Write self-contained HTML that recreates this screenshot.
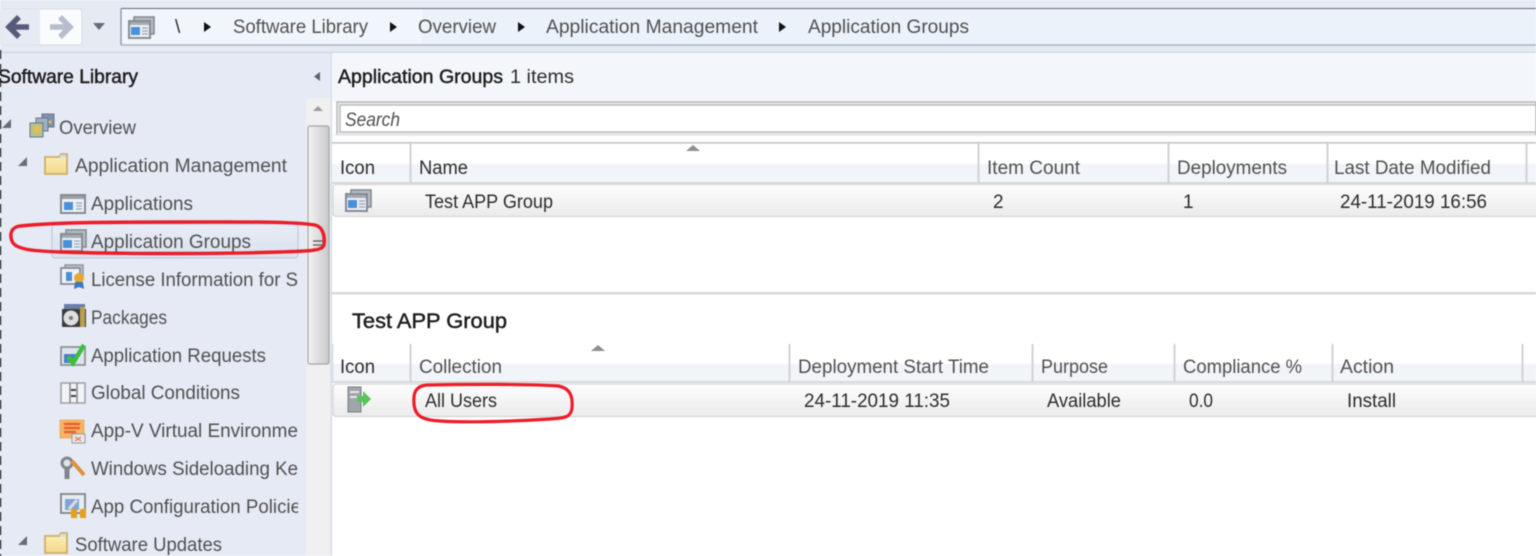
<!DOCTYPE html>
<html>
<head>
<meta charset="utf-8">
<title>Application Groups</title>
<style>
html,body{margin:0;padding:0;width:1536px;height:556px;overflow:hidden;background:#fff}
svg{display:block}
#all{filter:blur(.6px)}
text{font-family:"Liberation Sans",sans-serif;font-size:19px;fill:#505050}
.d{fill:#2c2c2c}
.b{fill:#1c1c1c;stroke:#1c1c1c;stroke-width:.45px}
</style>
</head>
<body>
<svg width="1536" height="556" viewBox="0 0 1536 556" xmlns="http://www.w3.org/2000/svg">
<defs>
<linearGradient id="row" x1="0" y1="0" x2="0" y2="1"><stop offset="0" stop-color="#fdfdfd"/><stop offset="1" stop-color="#ebebeb"/></linearGradient>
<linearGradient id="sel" x1="0" y1="0" x2="0" y2="1"><stop offset="0" stop-color="#e8ecf5"/><stop offset="1" stop-color="#dbe2ef"/></linearGradient>
<linearGradient id="thumb" x1="0" y1="0" x2="1" y2="0"><stop offset="0" stop-color="#f4f4f4"/><stop offset="1" stop-color="#c8c8c8"/></linearGradient>
<linearGradient id="folder" x1="0" y1="0" x2="0" y2="1"><stop offset="0" stop-color="#fdf0b8"/><stop offset="1" stop-color="#f3d98c"/></linearGradient>
<clipPath id="lc"><rect x="0" y="60" width="298" height="496"/></clipPath>
<g id="app">
<rect x="0" y="0" width="24" height="18" fill="#eef1f5" stroke="#868b92" stroke-width="2"/>
<rect x="1" y="1" width="22" height="3" fill="#9aa0a8"/>
<rect x="3" y="7" width="9" height="8" fill="#4a90d9"/>
<path d="M15 8h6M15 11h6M15 14h6" stroke="#9fb0c4" stroke-width="1.400"/>
</g>
<g id="appg">
<rect x="5" y="0" width="20" height="17" fill="#b9bdc3" stroke="#868b92" stroke-width="1.600"/>
<rect x="0" y="4" width="21" height="17" fill="#eef1f5" stroke="#868b92" stroke-width="2"/>
<rect x="1" y="5" width="19" height="3" fill="#a6abb2"/>
<rect x="2" y="10" width="9" height="8" fill="#4a90d9"/>
<path d="M13 11h6M13 14h6M13 17h6" stroke="#9fb0c4" stroke-width="1.400"/>
</g>
<g id="fold">
<path d="M1 4h14l2-3h6v20H1z" fill="url(#folder)" stroke="#cfae6a" stroke-width="1.800"/>
<path d="M16 2h6v3h-6z" fill="#cfe0ee"/>
</g>
</defs>
<g id="all">
<!-- backgrounds -->
<rect width="1536" height="556" fill="#fff"/>
<rect width="1536" height="53" fill="#e6ebf3"/>
<rect x="121" y="8.500" width="1415" height="37" fill="#ebf2fa"/>
<rect x="122" y="9" width="300" height="36" fill="#f1f6fc"/>
<path d="M121 8.500H1536" stroke="#5c6b7b" stroke-width="1"/>
<path d="M121 45H1536" stroke="#aab3bf" stroke-width="1.600"/>
<path d="M121 8.500V45" stroke="#8c99a8" stroke-width="1.400"/>
<path d="M0 52.500H1536" stroke="#ccd5e2" stroke-width="1.400"/>

<!-- nav buttons -->
<rect x="1" y="9" width="81" height="36" rx="3" fill="#fafbfd" stroke="#d5dbe5"/>
<rect x="1" y="9" width="39" height="36" rx="2" fill="#e6eaf2"/>
<path d="M29 27H11M19 17l-10 10 10 10" fill="none" stroke="#565b7a" stroke-width="5.500"/>
<path d="M50 27H68M60 17l10 10-10 10" fill="none" stroke="#b6bed0" stroke-width="5.500"/>
<path d="M93 23h12l-6 7z" fill="#666c78"/>
<use href="#appg" x="129" y="17"/>

<!-- breadcrumbs -->
<text x="175" y="33" class="d" textLength="8">\</text>
<path d="M204 22l7 5-7 5zM390 22l7 5-7 5zM518 22l7 5-7 5zM779 22l7 5-7 5z" fill="#111"/>
<text x="233" y="33" textLength="135" lengthAdjust="spacingAndGlyphs">Software Library</text>
<text x="418" y="33" textLength="78" lengthAdjust="spacingAndGlyphs">Overview</text>
<text x="546" y="33" textLength="212" lengthAdjust="spacingAndGlyphs">Application Management</text>
<text x="808" y="33" textLength="161" lengthAdjust="spacingAndGlyphs">Application Groups</text>

<!-- left panel -->
<rect x="0" y="53" width="331" height="503" fill="#e5eaf4"/>
<path d="M0.500 50V556" stroke="#111" stroke-width="1.300" stroke-dasharray="9 5"/>
<text x="-2" y="83" class="b" textLength="140" lengthAdjust="spacingAndGlyphs">Software Library</text>
<path d="M320 72v9l-6-4.500z" fill="#5a6270"/>

<!-- scrollbar -->
<rect x="306" y="98" width="24" height="458" fill="#f0f0f0"/>
<path d="M318 106l-5 5h10z" fill="#9a9a9a"/>
<rect x="308" y="126" width="21" height="238" rx="2" fill="url(#thumb)" stroke="#a5a5a5" stroke-width="1.200"/>
<path d="M313 241h10M313 245h10M313 249h10" stroke="#555" stroke-width="1.300"/>

<!-- selection -->
<rect x="52" y="224" width="246" height="34" rx="3" fill="url(#sel)" stroke="#bcc4d4"/>

<!-- tree arrows -->
<path d="M11 119v9H2zM27 157v9h-9zM27 536v9h-9z" fill="#6a6e74"/>

<!-- tree icons -->
<g transform="translate(30,114)">
<rect x="12" y="0" width="12" height="13" fill="#7f93b2" stroke="#6a7488"/>
<rect x="6" y="4" width="12" height="13" fill="#9fb0c4" stroke="#6a7488"/>
<rect x="0" y="9" width="13" height="14" fill="#b7c18c" stroke="#6a7488"/>
<circle cx="7" cy="15" r="3.500" fill="#e8c04e"/>
<circle cx="20" cy="8" r="1.500" fill="#e8c04e"/>
</g>
<use href="#fold" x="44" y="153"/>
<use href="#fold" x="44" y="532"/>
<use href="#app" x="61" y="195"/>
<use href="#appg" x="61" y="230"/>

<g transform="translate(61,265)">
<rect x="4" y="0" width="18" height="14" fill="#c4c8ce" stroke="#8a8f96" stroke-width="1.400"/>
<rect x="0" y="3" width="19" height="16" fill="#eef1f5" stroke="#8a8f96" stroke-width="1.800"/>
<rect x="5" y="7" width="6" height="9" fill="#4a90d9"/>
<circle cx="18" cy="13" r="5" fill="#e3a92c"/>
<path d="M14 17l-1 7 5-2 5 2-1-7z" fill="#3a78c8"/>
</g>
<g transform="translate(62,304)">
<path d="M2 0h21v5H2z" fill="#6a7ea8"/>
<rect x="0" y="5" width="24" height="18" fill="#3c3c3c"/>
<rect x="18" y="3" width="5" height="20" fill="#b8a050"/>
<circle cx="9" cy="14" r="7.500" fill="#dedede"/>
<circle cx="9" cy="14" r="2" fill="#777"/>
</g>
<g transform="translate(61,343)">
<rect x="0" y="4" width="24" height="18" fill="#dbe4ef" stroke="#888" stroke-width="1.600"/>
<rect x="3" y="11" width="12" height="9" fill="#4a80c8"/>
<path d="M7 14l5 6 11-18" fill="none" stroke="#3cc03c" stroke-width="4.500"/>
</g>
<g transform="translate(61,382)">
<rect x="0" y="1" width="24" height="20" fill="#f1f3f7" stroke="#a0a0a0" stroke-width="1.500"/>
<path d="M9 1v20M16 1v20" stroke="#888" stroke-width="1.500"/>
<path d="M10 8h5M10 14h5" stroke="#444" stroke-width="2"/>
</g>
<g transform="translate(60,419)">
<rect x="0" y="1" width="24" height="18" fill="#f5b468" stroke="#eab060"/>
<path d="M4 5h16M4 9h16M4 13h12" stroke="#e8622c" stroke-width="2.500"/>
<rect x="12" y="15" width="13" height="9" fill="#eaeaee" stroke="#999"/>
<path d="M15 18l6 4M21 18l-6 4" stroke="#e08a66" stroke-width="1.400"/>
</g>
<g transform="translate(60,456)">
<circle cx="7" cy="7" r="5" fill="#dfe3e8" stroke="#80858e" stroke-width="3"/>
<path d="M7 12v11" stroke="#80858e" stroke-width="5"/>
<path d="M12 5l12 14" stroke="#e0913a" stroke-width="4"/>
</g>
<g transform="translate(61,493)">
<rect x="0" y="1" width="24" height="19" fill="#e7ecf3" stroke="#848484" stroke-width="1.800"/>
<rect x="4" y="6" width="14" height="11" fill="#7ea5d6"/>
<path d="M8 16l8-9" stroke="#ddd" stroke-width="3"/>
<rect x="10" y="16" width="6" height="9" fill="#e3a11c"/>
<rect x="19" y="16" width="6" height="9" fill="#e3a11c"/>
</g>

<!-- tree labels -->
<g clip-path="url(#lc)">
<text x="59" y="134" textLength="77" lengthAdjust="spacingAndGlyphs">Overview</text>
<text x="75" y="172" textLength="212" lengthAdjust="spacingAndGlyphs">Application Management</text>
<text x="91" y="210" textLength="102" lengthAdjust="spacingAndGlyphs">Applications</text>
<text x="91" y="248" textLength="160" lengthAdjust="spacingAndGlyphs">Application Groups</text>
<text x="91" y="286" textLength="207" lengthAdjust="spacingAndGlyphs">License Information for S</text>
<text x="91" y="324" textLength="76" lengthAdjust="spacingAndGlyphs">Packages</text>
<text x="91" y="362" textLength="175" lengthAdjust="spacingAndGlyphs">Application Requests</text>
<text x="91" y="399" textLength="149" lengthAdjust="spacingAndGlyphs">Global Conditions</text>
<text x="91" y="437" textLength="207" lengthAdjust="spacingAndGlyphs">App-V Virtual Environme</text>
<text x="91" y="475" textLength="207" lengthAdjust="spacingAndGlyphs">Windows Sideloading Ke</text>
<text x="91" y="513" textLength="210" lengthAdjust="spacingAndGlyphs">App Configuration Policie</text>
<text x="75" y="551" textLength="147" lengthAdjust="spacingAndGlyphs">Software Updates</text>
</g>

<!-- right panel -->
<rect x="331" y="53" width="1205" height="503" fill="#fff"/>
<path d="M331.500 53V556" stroke="#d8dfe9" stroke-width="1.400"/>
<rect x="332" y="54" width="1204" height="48" fill="#f3f7fb"/>
<text x="338" y="83" class="b" textLength="165" lengthAdjust="spacingAndGlyphs">Application Groups</text>
<text x="510" y="83" class="d" textLength="64" lengthAdjust="spacingAndGlyphs">1 items</text>

<!-- search -->
<rect x="337" y="102" width="1199" height="33" fill="#e8ecf1" stroke="#b4b4b4" stroke-width="1.400"/>
<rect x="340" y="105" width="1196" height="27" fill="#fff" stroke="#b9b9b9" stroke-width="1.400"/>
<text x="345" y="126" style="font-style:italic" fill="#666" textLength="55" lengthAdjust="spacingAndGlyphs">Search</text>
<path d="M332 135H1536" stroke="#eef2f7" stroke-width="1"/>

<!-- upper table header -->
<rect x="332" y="143" width="1204" height="21" fill="#fff"/>
<rect x="332" y="164" width="1204" height="19" fill="#f1f4f9"/>
<path d="M332 142.800H1536" stroke="#c6c6c6" stroke-width="1.600"/>
<path d="M332 183H1536" stroke="#d0d0d0" stroke-width="1.400"/>
<path d="M410.500 143V183M978.500 143V183M1168.500 143V183M1327.500 143V183M1526.500 143V183" stroke="#d2d2d2" stroke-width="2"/>
<path d="M686 151l7-6 7 6z" fill="#8e8e8e"/>
<text x="340" y="174" textLength="35" lengthAdjust="spacingAndGlyphs" class="d">Icon</text>
<text x="419" y="174" textLength="49" lengthAdjust="spacingAndGlyphs" class="d">Name</text>
<text x="987" y="174" textLength="93" lengthAdjust="spacingAndGlyphs">Item Count</text>
<text x="1177" y="174" textLength="110" lengthAdjust="spacingAndGlyphs">Deployments</text>
<text x="1334" y="174" textLength="157" lengthAdjust="spacingAndGlyphs">Last Date Modified</text>

<!-- upper row -->
<rect x="333" y="184.500" width="1210" height="32" rx="3" fill="url(#row)" stroke="#d6d6d6" stroke-width="1.200"/>
<use href="#appg" x="346" y="190"/>
<text x="425" y="208" textLength="128" lengthAdjust="spacingAndGlyphs" class="d">Test APP Group</text>
<text x="993" y="208" class="d">2</text>
<text x="1183" y="208" class="d">1</text>
<text x="1340" y="208" textLength="147" lengthAdjust="spacingAndGlyphs" class="d">24-11-2019 16:56</text>

<!-- splitter -->
<rect x="332" y="292" width="1204" height="2.500" fill="#d9d9d9"/>

<!-- lower pane -->
<text x="352" y="328" class="b" style="font-size:21px" textLength="155" lengthAdjust="spacingAndGlyphs">Test APP Group</text>
<rect x="332" y="364" width="1204" height="18" fill="#f1f4f9"/>
<path d="M332 382H1536" stroke="#d0d0d0" stroke-width="1.400"/>
<path d="M332 344V382" stroke="#d8e0ea" stroke-width="3"/>
<path d="M410.500 344V382M789.500 344V382M1032.500 344V382M1174.500 344V382M1332.500 344V382M1522.500 344V382" stroke="#d2d2d2" stroke-width="2"/>
<path d="M591 351l7-6 7 6z" fill="#8e8e8e"/>
<text x="340" y="373" textLength="35" lengthAdjust="spacingAndGlyphs" class="d">Icon</text>
<text x="419" y="373" textLength="83" lengthAdjust="spacingAndGlyphs">Collection</text>
<text x="798" y="373" textLength="191" lengthAdjust="spacingAndGlyphs">Deployment Start Time</text>
<text x="1041" y="373" textLength="67" lengthAdjust="spacingAndGlyphs">Purpose</text>
<text x="1183" y="373" textLength="119" lengthAdjust="spacingAndGlyphs">Compliance %</text>
<text x="1340" y="373" textLength="54" lengthAdjust="spacingAndGlyphs">Action</text>

<!-- lower row -->
<rect x="333" y="384" width="1210" height="32.500" rx="3" fill="url(#row)" stroke="#d6d6d6" stroke-width="1.200"/>
<g transform="translate(348,387)">
<rect x="0" y="0" width="13" height="25" fill="#a0a5ac" stroke="#7a7f85"/>
<rect x="2" y="4" width="9" height="2" fill="#e8e8e8"/>
<rect x="2" y="9" width="9" height="2" fill="#e8e8e8"/>
<path d="M9 9h6V4l8 8-8 8v-5H9z" fill="#5cc25c"/>
</g>
<text x="425" y="407" textLength="72" lengthAdjust="spacingAndGlyphs" class="d">All Users</text>
<text x="804" y="407" textLength="146" lengthAdjust="spacingAndGlyphs" class="d">24-11-2019 11:35</text>
<text x="1047" y="407" textLength="74" lengthAdjust="spacingAndGlyphs" class="d">Available</text>
<text x="1189" y="407" textLength="24" lengthAdjust="spacingAndGlyphs" class="d">0.0</text>
<text x="1347" y="407" textLength="49" lengthAdjust="spacingAndGlyphs" class="d">Install</text>

<!-- red annotations -->
<path d="M20 226C60 222 120 222 180 222C230 222 290 221 315 225C323 227 325 236 324 245C322 251 310 251 280 252C220 254 120 254 60 252C35 251 15 250 12 241C9 233 12 227 20 226Z" fill="none" stroke="#ec1c28" stroke-width="3.400"/>
<path d="M427 385C470 384 530 384 558 386C570 388 573 396 572 408C571 417 566 418 550 419C520 421 470 423 440 421C422 420 415 416 414 404C413 392 416 386 427 385Z" fill="none" stroke="#ec1c28" stroke-width="3.200"/>
</g>
</svg>
</body>
</html>
